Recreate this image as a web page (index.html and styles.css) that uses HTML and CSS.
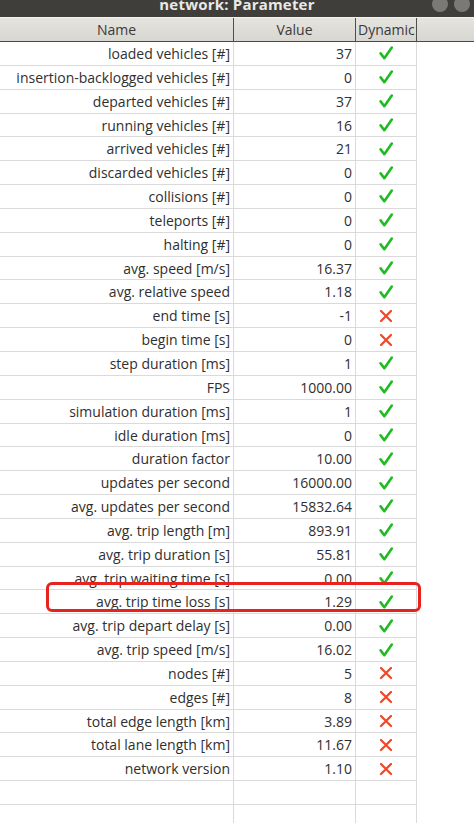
FILE: index.html
```html
<!DOCTYPE html>
<html>
<head>
<meta charset="utf-8">
<link rel="stylesheet" href="styles.css">
</head>
<body>
<div class="window">
  <div class="titlebar">
    <span class="title">network: Parameter</span>
    <div class="winbtns"><span class="wbtn"></span><span class="wbtn"></span></div>
  </div>
  <div class="header">
    <div class="hcell c-name">Name</div>
    <div class="hcell c-value">Value</div>
    <div class="hcell c-dyn">Dynamic</div>
    <div class="hcell c-rest"></div>
  </div>
  <div class="body" id="rows"></div>
  <div class="highlight"></div>
</div>
<script>
var data = [
["loaded vehicles [#]","37",1],
["insertion-backlogged vehicles [#]","0",1],
["departed vehicles [#]","37",1],
["running vehicles [#]","16",1],
["arrived vehicles [#]","21",1],
["discarded vehicles [#]","0",1],
["collisions [#]","0",1],
["teleports [#]","0",1],
["halting [#]","0",1],
["avg. speed [m/s]","16.37",1],
["avg. relative speed","1.18",1],
["end time [s]","-1",0],
["begin time [s]","0",0],
["step duration [ms]","1",1],
["FPS","1000.00",1],
["simulation duration [ms]","1",1],
["idle duration [ms]","0",1],
["duration factor","10.00",1],
["updates per second","16000.00",1],
["avg. updates per second","15832.64",1],
["avg. trip length [m]","893.91",1],
["avg. trip duration [s]","55.81",1],
["avg. trip waiting time [s]","0.00",1],
["avg. trip time loss [s]","1.29",1],
["avg. trip depart delay [s]","0.00",1],
["avg. trip speed [m/s]","16.02",1],
["nodes [#]","5",0],
["edges [#]","8",0],
["total edge length [km]","3.89",0],
["total lane length [km]","11.67",0],
["network version","1.10",0],
["","",-1],
["","",-1]
];
var check = '<svg class="ico" width="16" height="16" viewBox="0 0 16 16"><path d="M2.6 8.4 L6.3 13.2 L13.8 2.6" fill="none" stroke="#20bb20" stroke-width="2.6" stroke-linecap="round" stroke-linejoin="round"/></svg>';
var cross = '<svg class="ico" width="16" height="16" viewBox="0 0 16 16"><path d="M3 3 L13 13 M13 3 L3 13" fill="none" stroke="#f04828" stroke-width="2.3" stroke-linecap="round"/></svg>';
var html = '';
for (var i = 0; i < data.length; i++) {
  var d = data[i];
  html += '<div class="row"><div class="cell c-name">' + d[0] + '</div><div class="cell c-value">' + d[1] + '</div><div class="cell c-dyn">' + (d[2] === 1 ? check : d[2] === 0 ? cross : '') + '</div></div>';
}
document.getElementById('rows').innerHTML = html;
</script>
</body>
</html>
```
FILE: styles.css
```css
html, body { margin: 0; padding: 0; background: #ffffff; }
body { width: 474px; height: 823px; overflow: hidden; font-family: "Open Sans", "DejaVu Sans", sans-serif; color: #2f2f2f; }
.window { position: relative; width: 474px; height: 823px; overflow: hidden; background: #fff; }
.titlebar { height: 17px; background: #3f3e3a; display: flex; justify-content: center; overflow: hidden; position: relative; }
.title { color: #e9e9e6; font-weight: bold; font-size: 15px; line-height: 17px; margin-top: -4px; letter-spacing: 0.2px; }
.winbtns { position: absolute; right: 4px; top: -4px; display: flex; gap: 6px; }
.wbtn { width: 16px; height: 16px; border-radius: 50%; background: #7a7975; display: block; }
.header { display: flex; height: 25px; background: linear-gradient(#e6e4df, #d8d6d0); border-top: 1px solid #f2f1ee; border-bottom: 1px solid #4a4a48; box-sizing: border-box; }
.hcell { font-size: 14px; line-height: 23px; text-align: center; border-right: 1px solid #4f4e4b; box-sizing: border-box; overflow: hidden; white-space: nowrap; color: #3a3a3a; }
.c-name { width: 234px; flex: none; }
.c-value { width: 122px; flex: none; }
.c-dyn { width: 61px; flex: none; }
.c-rest { flex: 1; border-right: none; }
.hcell.c-dyn { text-align: left; padding-left: 2px; }
.body { display: flex; flex-direction: column; width: 417px; }
.row { display: flex; height: 23.85px; box-sizing: border-box; border-bottom: 1px solid #dadada; }
.cell { box-sizing: border-box; border-right: 1px solid #dadada; font-size: 14px; line-height: 24px; white-space: nowrap; overflow: hidden; }
.cell.c-name { text-align: right; padding-right: 3px; }
.cell.c-value { text-align: right; padding-right: 3px; }
.cell.c-dyn { display: flex; align-items: center; justify-content: center; }
.ico { display: block; }
.highlight { position: absolute; left: 46px; top: 582px; width: 375px; height: 30px; box-sizing: border-box; border: 3px solid #e8221e; border-radius: 6px; }
```
